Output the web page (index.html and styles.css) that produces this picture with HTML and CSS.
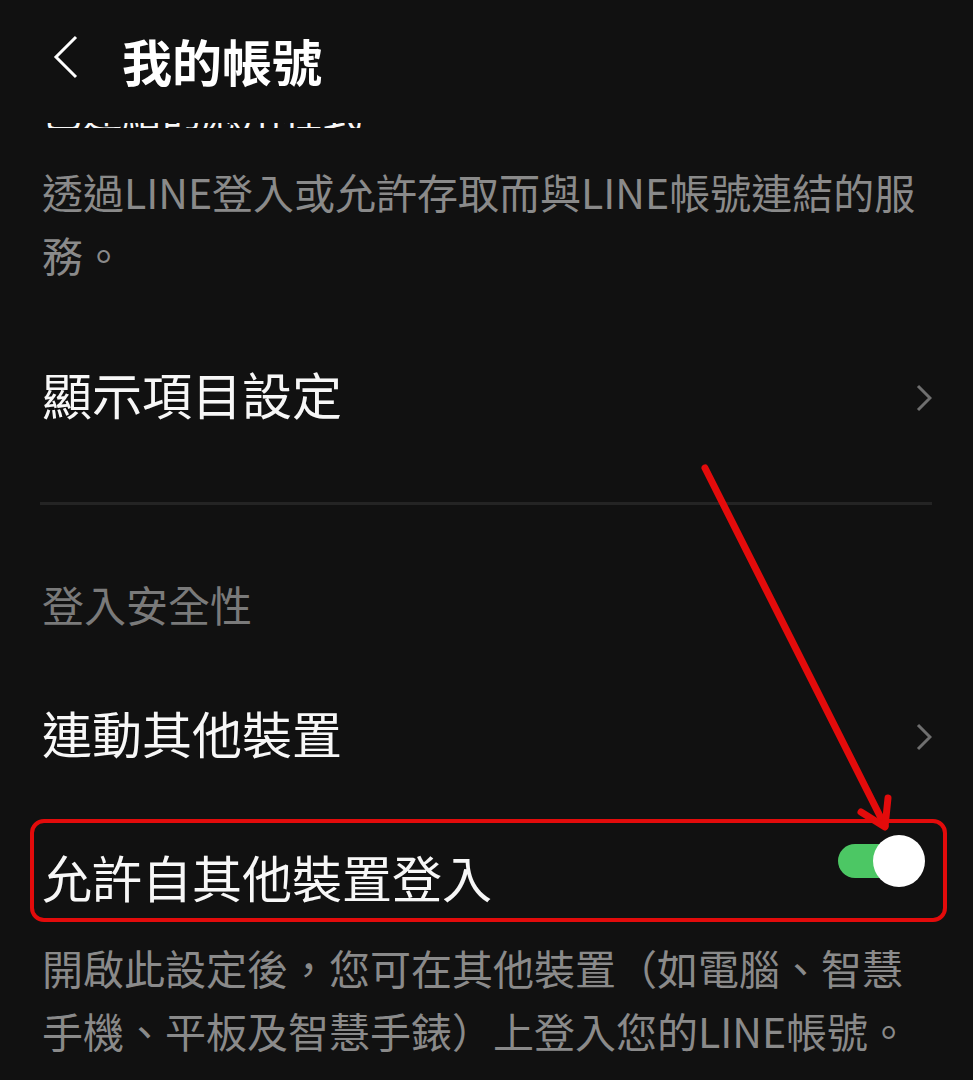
FILE: index.html
```html
<!DOCTYPE html>
<html lang="zh-Hant">
<head>
    <meta charset="UTF-8">
    <meta name="viewport" content="width=device-width, initial-scale=1.0">
    <title>我的帳號</title>
    <link rel="stylesheet" href="styles.css">
</head>
<body>
    <header class="top-bar">
        <svg class="back" width="32" height="48" viewBox="0 0 32 48">
            <polyline points="26,4 6,24 26,44" fill="none" stroke="#fff" stroke-width="3" />
        </svg>
        <h1 class="title">我的帳號</h1>
    </header>

    <div class="peek"><div class="peek-text">已連結的應用程式</div></div>
    <p class="desc first-desc">透過LINE登入或允許存取而與LINE帳號連結的服務。</p>

    <div class="row display-row">
        <span class="label">顯示項目設定</span>
        <svg class="chevron" width="16" height="28" viewBox="0 0 16 28">
            <polyline points="2,2 14,14 2,26" fill="none" stroke="#6f6f6f" stroke-width="3" />
        </svg>
    </div>

    <hr class="divider">

    <div class="section-title">登入安全性</div>

    <div class="row link-row">
        <span class="label">連動其他裝置</span>
        <svg class="chevron" width="16" height="28" viewBox="0 0 16 28">
            <polyline points="2,2 14,14 2,26" fill="none" stroke="#6f6f6f" stroke-width="3" />
        </svg>
    </div>

    <div class="mark-box">
        <div class="toggle-row">
            <span class="label">允許自其他裝置登入</span>
            <span class="switch on"><span class="knob"></span></span>
        </div>
    </div>

    <p class="desc last-desc">開啟此設定後，您可在其他裝置（如電腦、智慧手機、平板及智慧手錶）上登入您的LINE帳號。</p>

    <!-- red pointer drawn over the list -->
    <svg class="pointer" width="973" height="1080" viewBox="0 0 973 1080">
        <g fill="none" stroke="#e30b0b" stroke-width="7" stroke-linecap="round" stroke-linejoin="round">
            <line x1="705" y1="468" x2="885" y2="826" />
            <polyline points="861,812 885,827 888,798" />
        </g>
    </svg>
</body>
</html>
```

FILE: styles.css
```css
html, body {
    margin: 0;
    background: #111111;
}

body {
    font-family: "Noto Sans CJK TC", "Noto Sans", sans-serif;
    color: #f7f7f7;
    width: 973px;
    height: 1080px;
    overflow: hidden;
    position: relative;
}

.top-bar {
    height: 120px;
    display: flex;
    align-items: center;
    padding-left: 50px;
}

.back {
    margin-top: -6px;
}

.title {
    margin: 0 0 0 40px;
    font-size: 50px;
    font-weight: 700;
    line-height: 50px;
    color: #ffffff;
}

/* last line of the section above, scrolled under the bar */
.peek {
    height: 5px;
    margin-top: 3px;
    overflow: hidden;
    padding-left: 42px;
}

.peek-text {
    font-size: 40px;
    line-height: 40px;
    margin-top: -33px;
}

.desc {
    margin: 0;
    padding: 0 42px;
    font-size: 41px;
    line-height: 63px;
    color: #8a8a8a;
}

.first-desc {
    margin-top: 32px;
}

.row {
    display: flex;
    align-items: center;
    justify-content: space-between;
    padding: 0 41px 0 42px;
}

.label {
    font-size: 50px;
    line-height: 70px;
}

.chevron {
    margin-top: 9px;
}

.display-row {
    padding-top: 72px;
    padding-bottom: 74px;
}

.divider {
    margin: 0 41px 0 40px;
    border: 0;
    height: 3px;
    background: #242424;
}

.section-title {
    padding: 69px 42px 0;
    font-size: 42px;
    line-height: 60px;
    color: #7a7a7a;
}

.link-row {
    padding-top: 63px;
}

.mark-box {
    margin: 52px 26px 0 30px;
    height: 95px;
    border: 4px solid #e30b0b;
    border-radius: 14px;
}

.toggle-row {
    display: flex;
    justify-content: space-between;
    padding: 0 18px 0 8px;
}

.toggle-row .label {
    padding-top: 18px;
}

.switch {
    position: relative;
    width: 87px;
    height: 52px;
    margin-top: 12px;
}

.switch::before {
    content: "";
    position: absolute;
    left: 0;
    top: 9px;
    width: 68px;
    height: 34px;
    border-radius: 17px;
    background: #3a3a3a;
}

.switch.on::before {
    background: #4cc764;
}

.knob {
    position: absolute;
    right: 0;
    top: 0;
    width: 52px;
    height: 52px;
    border-radius: 50%;
    background: #ffffff;
}

.last-desc {
    margin-top: 14px;
}

.pointer {
    position: absolute;
    left: 0;
    top: 0;
    pointer-events: none;
}
```
